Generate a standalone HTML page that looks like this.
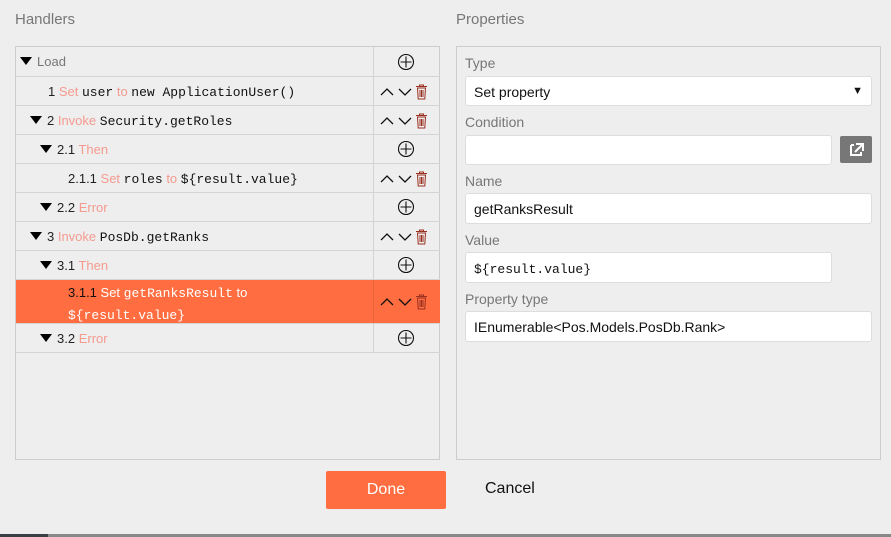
<!DOCTYPE html>
<html><head><style>
body{margin:0;width:891px;height:537px;background:#eee;font-family:"Liberation Sans",sans-serif;position:relative;overflow:hidden}
.h{position:absolute;top:11px;font-size:15px;color:#777}
.panel{position:absolute;top:46px;height:414px;border:1px solid #ccc;box-sizing:border-box}
.row{position:absolute;left:0;width:424px;height:29px;border-bottom:1px solid #d4d4d4;box-sizing:border-box;font-size:13px;color:#222}
.row .t{position:absolute;top:7px;white-space:nowrap}
.tri{display:inline-block;width:0;height:0;border-left:6px solid transparent;border-right:6px solid transparent;border-top:8px solid #000;margin-right:5px;vertical-align:1px}
.k{color:#f59a8f}
.c{font-family:"Liberation Mono",monospace;font-size:13px;color:#111}
.act{position:absolute;left:357px;top:0;width:67px;height:100%;border-left:1px solid #d4d4d4;box-sizing:border-box}
.act svg{position:absolute}
.lbl{position:absolute;left:465px;font-size:14px;color:#777}
.inp{position:absolute;left:465px;width:407px;height:31px;background:#fff;border:1px solid #ddd;border-radius:3px;box-sizing:border-box;font-size:14px;padding:7px 0 0 8px;color:#111}
</style></head><body>
<div class="h" style="left:15px">Handlers</div>
<div class="h" style="left:456px">Properties</div>

<div class="panel" style="left:15px;width:425px"></div>
<div style="position:absolute;left:16px;top:47px;width:424px">
<svg width="0" height="0" style="position:absolute"><defs>
<g id="plus"><circle cx="8" cy="8" r="7.5" fill="none" stroke="#111" stroke-width="1.1"/><path d="M8 2.5V13.5M2.5 8H13.5" stroke="#111" stroke-width="1.1"/></g>
<g id="ctl"><path d="M4 12L10 6L16 12" fill="none" stroke="#111" stroke-width="1.3"/><path d="M22 6L28 12L34 6" fill="none" stroke="#111" stroke-width="1.3"/><g fill="none" stroke="#9a3020" stroke-width="1"><path d="M39 3.5H50M42.5 3.5V2H46.5V3.5"/><path d="M40.5 5H48.5L47.8 16H41.2Z"/><path d="M43 7V14M44.5 7V14M46 7V14"/></g></g>
</defs></svg>
<div class="row" style="top:0;height:30px"><span class="t" style="left:4px;color:#777"><span class="tri"></span>Load</span><div class="act"><svg width="18" height="18" style="left:24px;top:7px"><use href="#plus"/></svg></div></div>
<div class="row" style="top:30px"><span class="t" style="left:32px">1 <span class="k">Set</span> <span class="c">user</span> <span class="k">to</span> <span class="c">new ApplicationUser()</span></span><div class="act"><svg width="60" height="20" style="left:3px;top:6px"><use href="#ctl"/></svg></div></div>
<div class="row" style="top:59px"><span class="t" style="left:14px"><span class="tri"></span>2 <span class="k">Invoke</span> <span class="c">Security.getRoles</span></span><div class="act"><svg width="60" height="20" style="left:3px;top:6px"><use href="#ctl"/></svg></div></div>
<div class="row" style="top:88px"><span class="t" style="left:24px"><span class="tri"></span>2.1 <span class="k">Then</span></span><div class="act"><svg width="18" height="18" style="left:24px;top:6px"><use href="#plus"/></svg></div></div>
<div class="row" style="top:117px"><span class="t" style="left:52px">2.1.1 <span class="k">Set</span> <span class="c">roles</span> <span class="k">to</span> <span class="c">${result.value}</span></span><div class="act"><svg width="60" height="20" style="left:3px;top:6px"><use href="#ctl"/></svg></div></div>
<div class="row" style="top:146px"><span class="t" style="left:24px"><span class="tri"></span>2.2 <span class="k">Error</span></span><div class="act"><svg width="18" height="18" style="left:24px;top:6px"><use href="#plus"/></svg></div></div>
<div class="row" style="top:175px"><span class="t" style="left:14px"><span class="tri"></span>3 <span class="k">Invoke</span> <span class="c">PosDb.getRanks</span></span><div class="act"><svg width="60" height="20" style="left:3px;top:6px"><use href="#ctl"/></svg></div></div>
<div class="row" style="top:204px"><span class="t" style="left:24px"><span class="tri"></span>3.1 <span class="k">Then</span></span><div class="act"><svg width="18" height="18" style="left:24px;top:6px"><use href="#plus"/></svg></div></div>
<div class="row" style="top:233px;height:44px;background:#ff6d40;border-bottom:1px solid #d4d4d4"><span class="t" style="left:52px;top:2px;line-height:21px;color:#fff"><span style="color:#111">3.1.1</span> Set <span class="c" style="color:#fff">getRanksResult</span> to<br><span class="c" style="color:#fff">${result.value}</span></span><div class="act" style="border-left-color:#e8643a"><svg width="60" height="20" style="left:3px;top:13px"><use href="#ctl"/></svg></div></div>
<div class="row" style="top:277px"><span class="t" style="left:24px"><span class="tri"></span>3.2 <span class="k">Error</span></span><div class="act"><svg width="18" height="18" style="left:24px;top:6px"><use href="#plus"/></svg></div></div>
</div>

<div class="panel" style="left:456px;width:425px"></div>
<div class="lbl" style="top:55px">Type</div>
<div class="inp" style="top:76px;height:30px">Set property<span style="position:absolute;right:8px;top:8px;font-size:11px">▼</span></div>
<div class="lbl" style="top:114px">Condition</div>
<div class="inp" style="top:135px;width:367px;height:30px"></div>
<div style="position:absolute;left:840px;top:136px;width:32px;height:27px;background:#777;border-radius:2px"><svg width="32" height="27"><path d="M11 9H14M11 9V19H21V16" fill="none" stroke="#fff" stroke-width="2"/><path d="M16 8H23V15M23 8L15 16" fill="none" stroke="#fff" stroke-width="2"/></svg></div>
<div class="lbl" style="top:173px">Name</div>
<div class="inp" style="top:193px">getRanksResult</div>
<div class="lbl" style="top:232px">Value</div>
<div class="inp" style="top:252px;width:367px"><span class="c">${result.value}</span></div>
<div class="lbl" style="top:291px">Property type</div>
<div class="inp" style="top:311px">IEnumerable&lt;Pos.Models.PosDb.Rank&gt;</div>

<div style="position:absolute;left:326px;top:471px;width:120px;height:38px;background:#ff6d40;border-radius:2px;color:#fff;font-size:16px;text-align:center;line-height:38px">Done</div>
<div style="position:absolute;left:485px;top:480px;font-size:16px;color:#111">Cancel</div>
<div style="position:absolute;left:0;top:534px;width:891px;height:3px;background:#888"></div>
<div style="position:absolute;left:0;top:534px;width:48px;height:3px;background:#3a3f44"></div>
</body></html>
